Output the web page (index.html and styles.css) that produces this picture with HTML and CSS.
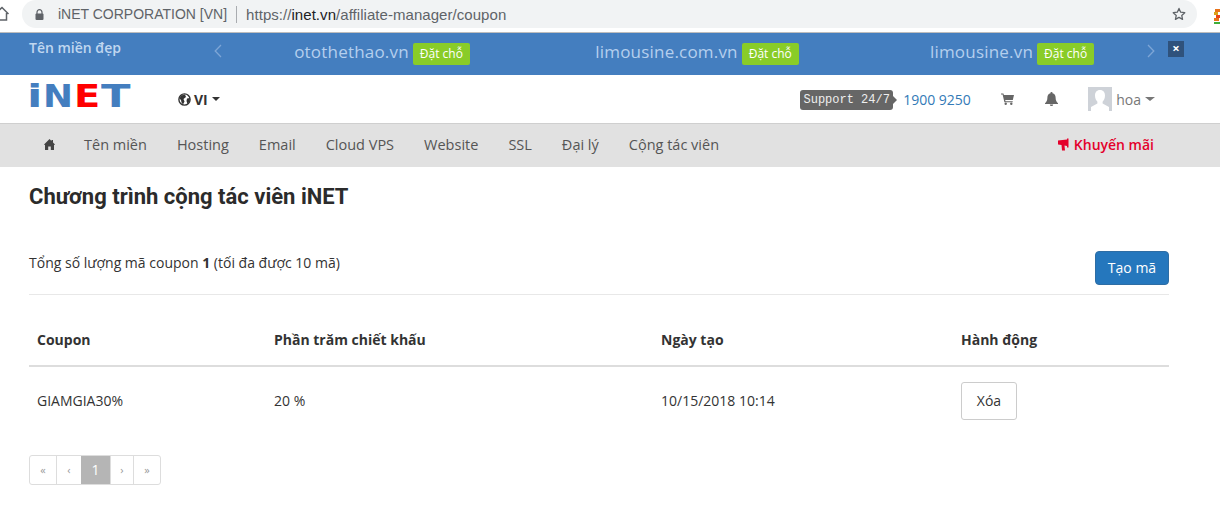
FILE: index.html
```html
<!DOCTYPE html>
<html lang="vi">
<head>
<meta charset="utf-8">
<title>Chương trình cộng tác viên iNET</title>
<link rel="stylesheet" href="styles.css">
</head>
<body>
<div class="chrome">
  <svg class="chrome-home" width="10" height="16" viewBox="0 0 10 16"><path d="M-5 8 L2 1.5 L8.5 8 M6.5 7 V14 H-3" fill="none" stroke="#5f6368" stroke-width="1.5"/></svg>
  <div class="omnibox">
    <svg class="lock" width="9" height="11" viewBox="0 0 9 11"><path d="M2 5V3.2a2.5 2.5 0 0 1 5 0V5" fill="none" stroke="#5f6368" stroke-width="1.2"/><rect x="0.5" y="4.5" width="8" height="6.5" rx="1" fill="#5f6368"/></svg>
    <span class="site">iNET CORPORATION [VN]</span>
    <span class="sep"></span>
    <span class="url">https://<b>inet.vn</b>/affiliate-manager/coupon</span>
    <svg class="star" width="14" height="14" viewBox="0 0 24 24"><path d="M12 2.5l2.9 6.4 7 .8-5.2 4.7 1.4 6.9-6.1-3.5-6.1 3.5 1.4-6.9L2.1 9.7l7-.8z" fill="none" stroke="#5f6368" stroke-width="2.2" stroke-linejoin="round"/></svg>
  </div>
  <svg class="ext" width="6" height="15" viewBox="0 0 6 15"><rect x="1" y="0" width="5" height="3" fill="#e8731a"/><rect x="0" y="3" width="4" height="3" fill="#d8a21a"/><rect x="2" y="6" width="4" height="3" fill="#e8421a"/><rect x="0" y="9" width="5" height="3" fill="#e8731a"/><rect x="0" y="13" width="6" height="2" fill="#3fae3a"/></svg>
</div>

<div class="promo">
  <div class="promo-title">Tên miền đẹp</div>
  <svg class="promo-arrow" width="8" height="14" viewBox="0 0 8 14"><path d="M7 1 L1.2 7 L7 13" fill="none" stroke="#7ea6d6" stroke-width="1.3"/></svg>
  <div class="promo-list">
    <div class="promo-item"><span class="domain">otothethao.vn</span><span class="reserve">Đặt chỗ</span></div>
    <div class="promo-item"><span class="domain">limousine.com.vn</span><span class="reserve">Đặt chỗ</span></div>
    <div class="promo-item"><span class="domain">limousine.vn</span><span class="reserve">Đặt chỗ</span></div>
  </div>
  <svg class="promo-arrow next" width="8" height="14" viewBox="0 0 8 14"><path d="M1 1 L6.8 7 L1 13" fill="none" stroke="#7ea6d6" stroke-width="1.3"/></svg>
  <div class="promo-close">×</div>
</div>

<header class="topbar">
  <div class="logo"><span class="logo-i">i</span><span class="logo-n">N</span><span class="logo-e">E</span><span class="logo-t">T</span></div>
  <div class="lang">
    <svg width="13" height="13" viewBox="0 0 13 13"><circle cx="6.5" cy="6.5" r="5.6" fill="#fff" stroke="#333" stroke-width="1.4"/><path d="M3 2.5 L7 1.5 L8 4 L5.500 6 L6.500 8.500 L5 11.500 L3.500 9.500 L3 7 L1.500 5.500 Z M9 5.500 L12 5 L11.500 8.500 L9.500 11 L8.500 8 Z" fill="#333"/></svg>
    <b>VI</b><span class="caret"></span>
  </div>
  <div class="top-right">
    <span class="support">Support 24/7</span>
    <a class="phone">1900 9250</a>
    <svg class="cart" width="13" height="12" viewBox="0 0 13 12"><path d="M0 .5h2.4l.5 1.5H13l-1.2 5H4.2l.3 1.2h7.2v1.1H3.400L1.600 1.600H0z" fill="#666"/><circle cx="4.700" cy="10.800" r="1.200" fill="#666"/><circle cx="10.300" cy="10.800" r="1.200" fill="#666"/></svg>
    <svg class="bell" width="13" height="14" viewBox="0 0 13 14"><path d="M6.500 0a1 1 0 0 1 1 1.200C9.600 1.700 10.600 3.400 10.600 5.500c0 3.200 1 4.400 2.400 5.700v.8H0v-.8c1.400-1.300 2.400-2.500 2.400-5.700 0-2.100 1-3.800 3.100-4.300a1 1 0 0 1 1-1.200z" fill="#666"/><path d="M4.800 12.500h3.400a1.700 1.500 0 0 1-3.400 0z" fill="#666"/></svg>
    <div class="user">
      <svg class="avatar" width="24" height="24" viewBox="0 0 24 24"><rect width="24" height="24" fill="#ced2d8"/><path d="M12 3c3.300 0 5 2.400 5 5.600 0 2.700-1.100 5-2.400 6.200v1.700l6.400 3.500V24H3v-4l6.400-3.500v-1.700C8.100 13.600 7 11.300 7 8.600 7 5.400 8.700 3 12 3z" fill="#fff"/></svg>
      <span class="user-name">hoa</span><span class="caret light"></span>
    </div>
  </div>
</header>

<nav class="mainnav">
  <svg class="nav-home" width="11" height="11" viewBox="0 0 11 11"><path d="M5.500 0L7.500 2V1H9v2.500L11 5.500l-.6.600-.4-.4V11H6.800V7.500H4.200V11H1V5.700l-.4.400L0 5.500z" fill="#444"/></svg>
  <a>Tên miền</a>
  <a>Hosting</a>
  <a>Email</a>
  <a>Cloud VPS</a>
  <a>Website</a>
  <a>SSL</a>
  <a>Đại lý</a>
  <a>Cộng tác viên</a>
  <a class="promo-link">
    <svg width="13" height="13" viewBox="0 0 13 13"><path d="M0 2.500L9 1.500V.5h1.500v9H9V8L6.500 7.500l.5 5H4L3.500 7 0 6.500z" fill="#e4002b"/></svg>
    Khuyến mãi
  </a>
</nav>

<main class="content">
  <h1>Chương trình cộng tác viên iNET</h1>
  <div class="summary">
    <p>Tổng số lượng mã coupon <b>1</b> (tối đa được 10 mã)</p>
    <a class="btn-primary">Tạo mã</a>
  </div>
  <table class="coupons">
    <thead>
      <tr><th class="c1">Coupon</th><th class="c2">Phần trăm chiết khấu</th><th class="c3">Ngày tạo</th><th class="c4">Hành động</th></tr>
    </thead>
    <tbody>
      <tr><td>GIAMGIA30%</td><td>20 %</td><td>10/15/2018 10:14</td><td><a class="btn-default">Xóa</a></td></tr>
    </tbody>
  </table>
  <ul class="pager">
    <li>«</li><li>‹</li><li class="active">1</li><li>›</li><li>»</li>
  </ul>
</main>
</body>
</html>
```
FILE: styles.css
```css
* { box-sizing: border-box; }
html, body { margin: 0; padding: 0; }
body {
  width: 1220px;
  height: 529px;
  overflow: hidden;
  background: #fff;
  font-family: "Open Sans", sans-serif;
  font-size: 14px;
  color: #333;
}
a { text-decoration: none; color: inherit; }

/* Browser bar */
.chrome {
  height: 33px;
  display: flex;
  align-items: flex-start;
  border-bottom: 1px solid #bdbdbd;
  background: #fff;
}
.chrome-home { margin-top: 6px; flex: none; }
.omnibox {
  margin-left: 12px;
  width: 1175px;
  height: 28px;
  border-radius: 14px;
  background: #f1f3f4;
  display: flex;
  align-items: center;
  padding: 0 11px 0 13px;
  font-family: "Liberation Sans", sans-serif;
  font-size: 14px;
  color: #5f6368;
}
.site { margin-left: 14px; color: #5f6368; }
.sep { width: 1px; height: 17px; background: #a9acb0; margin: 0 9px 0 9px; }
.url { font-size: 15px; letter-spacing: 0.05px; }
.url b { font-weight: 400; color: #202124; }
.star { margin-left: auto; }
.ext { margin: 9px 0 0 17px; flex: none; }

/* Promo bar */
.promo {
  height: 42px;
  background: #447ebf;
  display: flex;
  align-items: flex-start;
  position: relative;
}
.promo-title {
  margin-left: 29px;
  width: 185px;
  padding-top: 5px;
  font-size: 14px;
  line-height: 20px;
  font-weight: 600;
  color: #c0d7f0;
  flex: none;
}
.promo-arrow { margin-top: 11px; flex: none; }
.promo-arrow.next { margin-left: -23px; }
.promo-list { display: flex; margin-left: 2.5px; }
.promo-item {
  width: 315px;
  display: flex;
  justify-content: center;
  align-items: center;
  gap: 4px;
  height: 42px;
}
.domain { font-size: 17px; color: #b4cfee; letter-spacing: 0.2px; line-height: 42px; margin-top: -4px; }
.reserve {
  width: 57px;
  height: 22px;
  border-radius: 2px;
  background: #89cc28;
  color: #fff;
  font-size: 12px;
  line-height: 22px;
  text-align: center;
}
.promo-close {
  position: absolute;
  left: 1168px;
  top: 8px;
  width: 16px;
  height: 16px;
  background: #2f527c;
  color: #fff;
  font-size: 13px;
  font-weight: 700;
  line-height: 15px;
  text-align: center;
}

/* Header */
.topbar {
  height: 49px;
  display: flex;
  align-items: center;
  padding-left: 29px;
  border-bottom: 1px solid #cfcfcf;
  background: #fff;
}
.logo {
  flex: none;
  width: 102px;
  height: 34px;
  margin-top: -6px;
  display: flex;
  font-family: "DejaVu Sans", sans-serif;
  font-weight: 700;
  font-size: 32px;
  line-height: 34px;
  color: #447ebf;
}
.logo-i, .logo-n, .logo-e, .logo-t { display: block; transform-origin: left center; }
.logo-i { width: 16px; margin-left: -2px; transform: scaleX(1.4); }
.logo-n { width: 31px; transform: scaleX(1.12); }
.logo-e { width: 27px; color: #f00; transform: scaleX(1.2); }
.logo-t { width: 30px; transform: scaleX(1.35); }
.lang {
  margin-left: 47px;
  display: flex;
  align-items: center;
  gap: 3px;
  font-size: 14px;
  color: #333;
}
.lang b { font-weight: 700; }
.caret {
  display: inline-block;
  margin-left: 1px;
  border-top: 4px solid #333;
  border-left: 4px solid transparent;
  border-right: 4px solid transparent;
}
.caret.light { border-top-color: #777; margin-left: 4px; border-width: 4px 5px 0; }
.top-right {
  margin-left: auto;
  margin-right: 65px;
  display: flex;
  align-items: center;
}
.support {
  position: relative;
  width: 93px;
  height: 20px;
  border-radius: 3px;
  background: #666;
  color: #eee;
  font-family: "Liberation Mono", monospace;
  font-size: 12px;
  line-height: 21px;
  text-align: center;
  white-space: nowrap;
  margin-top: 2px;
}
.support::after {
  content: "";
  position: absolute;
  right: -4px;
  top: 6px;
  border-left: 4px solid #666;
  border-top: 4px solid transparent;
  border-bottom: 4px solid transparent;
}
.phone { margin-left: 10px; color: #337ab7; font-size: 14px; width: 68px; white-space: nowrap; }
.cart { margin-left: 30px; }
.bell { margin-left: 31px; }
.user { margin-left: 30px; display: flex; align-items: center; }
.avatar { flex: none; }
.user-name { margin-left: 4px; color: #777; font-size: 14px; }

/* Nav */
.mainnav {
  height: 43px;
  background: #e1e1e1;
  display: flex;
  align-items: center;
  padding: 0 0 2px 44px;
  gap: 30px;
  font-size: 14.5px;
  color: #555;
}
.mainnav a { white-space: nowrap; }
.nav-home { flex: none; margin-right: -1px; }
.mainnav .promo-link {
  margin-left: auto;
  margin-right: 66px;
  font-size: 14px;
  color: #e4002b;
  font-weight: 600;
  display: flex;
  align-items: center;
  gap: 3px;
}

/* Content */
.content { padding: 0 51px 0 29px; }
h1 {
  margin: 16px 0 0;
  font-family: Roboto, sans-serif;
  font-weight: 700;
  font-size: 22px;
  line-height: 28px;
  color: #2b2b2b;
}
.summary {
  margin-top: 40px;
  display: flex;
  justify-content: space-between;
  align-items: flex-start;
  height: 44px;
  border-bottom: 1px solid #e8e8e8;
}
.summary p { margin: 2px 0 0; font-size: 14px; line-height: 20px; }
.btn-primary {
  width: 74px;
  height: 34px;
  border-radius: 4px;
  background: #2577bd;
  border: 1px solid #2e6da4;
  color: #fff;
  font-size: 14px;
  line-height: 32px;
  text-align: center;
}
.coupons {
  width: 1140px;
  border-collapse: collapse;
  table-layout: fixed;
  font-size: 14px;
}
.coupons th {
  height: 71px;
  padding: 18px 8px 0;
  text-align: left;
  font-weight: 700;
  border-bottom: 2px solid #ddd;
  color: #333;
}
.c1 { width: 237px; }
.c2 { width: 387px; }
.c3 { width: 300px; }
.c4 { width: 216px; }
.coupons td { height: 68px; padding: 0 8px; }
.btn-default {
  display: block;
  width: 56px;
  height: 38px;
  border: 1px solid #ccc;
  border-radius: 3px;
  font-size: 14px;
  line-height: 36px;
  text-align: center;
  color: #333;
}
.pager {
  list-style: none;
  margin: 21px 0 0;
  padding: 0;
  width: 132px;
  height: 30px;
  display: flex;
  border: 1px solid #ddd;
  border-radius: 3px;
  font-size: 11px;
  color: #999;
}
.pager li {
  flex: none;
  width: 27px;
  line-height: 28px;
  text-align: center;
  border-right: 1px solid #ddd;
}
.pager li:nth-child(2) { width: 25px; }
.pager li.active { width: 30px; margin-left: -1px; background: #b5b5b5; color: #fff; font-size: 14px; }
.pager li:nth-child(4) { width: 23px; }
.pager li:last-child { width: 26px; border-right: 0; }
```
